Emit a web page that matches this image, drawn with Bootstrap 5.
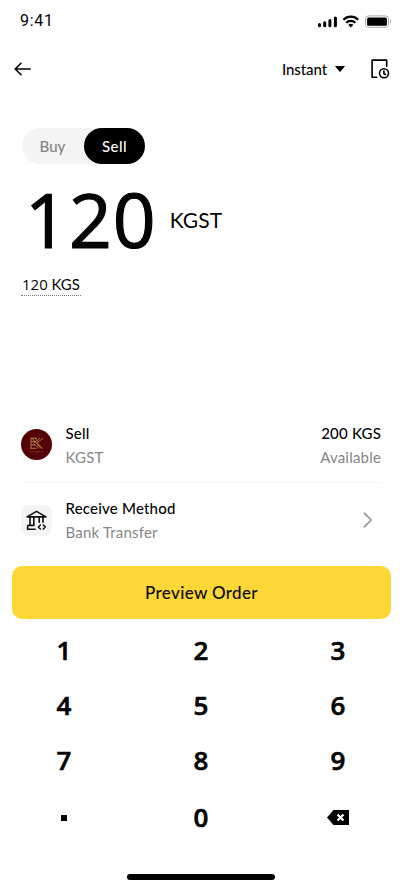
<!DOCTYPE html>
<html lang="en">
<head>
<meta charset="utf-8">
<meta name="viewport" content="width=device-width, initial-scale=1">
<title>Sell KGST</title>
<link href="https://cdn.jsdelivr.net/npm/bootstrap@5.3.0/dist/css/bootstrap.min.css" rel="stylesheet">
<style>
body{background:#fff;color:#050505;font-family:Lato,"Open Sans",sans-serif;overflow:hidden}
svg{display:block;flex:none}
.screen{width:404px;height:886px;overflow:hidden}
.statusbar{height:42px;padding:0 12px 0 20px}
.clock{font:400 16px/20px Roboto,sans-serif;letter-spacing:.75px}
.topbar{height:54px;padding:0 14px}
.mode{font-size:15px;line-height:20px;font-weight:500;letter-spacing:-.1px}
.history{margin-left:26px}
.tabs{width:123px;height:36px;margin:32px 0 0 22px;background:#f4f4f4}
.tabs .btn{font-size:15px;line-height:20px;font-weight:500;padding:0;border:0;height:36px;width:61px;color:#838383}
.tabs .btn.active{background:#000;color:#fff;letter-spacing:.4px}
.amount{height:84px;margin:13px 0 0 25px}
.figure-value{font:400 75px/84px "Open Sans",sans-serif;letter-spacing:1px;-webkit-text-stroke:1.2px #000}
.unit{font-size:21px;line-height:28px;margin:2px 0 0 13px;letter-spacing:.15px}
.fiat{margin:14px 0 0 21px;height:21px;border-bottom:1px dotted #777;font-size:15px;line-height:18px;width:60px;padding-left:1px}
.fiat span{font:400 15px/18px "Open Sans",sans-serif}
.info{margin:111px 23px 0 21px}
.info-row{height:75px}
.info-row + .info-row{border-top:1px solid #f4f4f4}
.info-copy{padding-left:13.5px}
.label-main{font-size:15px;line-height:24px;font-weight:500;letter-spacing:.2px}
.label-sub{font-size:15px;line-height:24px;color:#868686;font-weight:400;letter-spacing:.2px}
.tile{width:31px;height:31px;border-radius:7px;background:#f4f4f4}
.preview{margin:9px 13px 0 12px;height:53px;border-radius:10px;background:#fdd735;border:0;font-size:17px;font-weight:500;letter-spacing:.35px;color:#0b0a03;width:379px}
.preview:hover{background:#fdd735}
.keys{padding:4px 42px 0 40px}
.key{width:48px;height:55px;font:600 26px/55px "Open Sans",sans-serif;-webkit-text-stroke:.6px #000;text-align:center;display:flex;justify-content:center;align-items:center}
.last-keys{margin-top:2px}
.dot{width:6px;height:6px;background:#000}
.home-bar{width:148px;height:6px;border-radius:3px;background:#000;margin:29px 0 0 127px}
</style>
<script src="https://cdn.jsdelivr.net/npm/bootstrap@5.3.0/dist/js/bootstrap.bundle.min.js"></script>
</head>
<body>
<main class="screen d-flex flex-column">
  <div class="statusbar d-flex align-items-center justify-content-between">
    <span class="clock">9:41</span>
    <svg width="76" height="16" viewBox="316 13 76 16">
      <path d="M319.500 25.800v-1.200M324.700 25.800v-3M329.900 25.800v-5.300M335.400 25.800v-7.800" stroke="#000" stroke-width="3" stroke-linecap="round"/>
      <g fill="none" stroke="#000" stroke-width="2.300"><path d="M343.400 19.700a10.600 10.600 0 0 1 14.800 0M346.200 22.700a6.600 6.600 0 0 1 9.200 0"/></g>
      <path d="M348.300 25a3.700 3.700 0 0 1 5 0l-2.500 2.500z"/>
      <rect x="365.500" y="15.900" width="23" height="11.400" rx="3" fill="none" stroke="#aaa"/>
      <rect x="367.100" y="17.500" width="19.800" height="8.200" rx="1.500"/>
      <path d="M390 19.800c1.800.8 1.800 2.900 0 3.700z" fill="#aaa"/>
    </svg>
  </div>
  <header class="topbar d-flex align-items-center">
    <svg width="18" height="14" viewBox="0 0 18 14" fill="none" stroke="#000" stroke-width="1.600" stroke-linecap="round" stroke-linejoin="round"><path d="M16.200 7H1.200M7 1.200 1.200 7 7 12.800"/></svg>
    <div class="mode d-flex align-items-center ms-auto">Instant
      <svg class="ms-2" width="10" height="6" viewBox="0 0 10 6"><path d="M.7 0h8.600q.8 0 .3.700L5.500 5.600q-.5.600-1 0L.4.700Q-.1 0 .7 0z"/></svg>
    </div>
    <svg class="history" width="19" height="20" viewBox="0 0 19 20" fill="none" stroke="#000" stroke-width="1.600" stroke-linejoin="round" stroke-linecap="round"><path d="M15.700 7.300V1.100H1.100v17.200h4.700"/><circle cx="13" cy="14.300" r="4.500"/><path d="M12.900 12v2.500l1.500 1"/></svg>
  </header>
  <div class="tabs d-flex justify-content-between rounded-pill">
    <button class="btn rounded-pill">Buy</button>
    <button class="btn rounded-pill active">Sell</button>
  </div>
  <div class="amount d-flex align-items-center">
    <span class="figure-value">120</span><span class="unit">KGST</span>
  </div>
  <div class="fiat text-nowrap"><span>120</span> KGS</div>

  <section class="info">
    <div class="info-row d-flex align-items-center">
      <svg width="31" height="31" viewBox="0 0 31 31">
        <circle cx="15.500" cy="15.500" r="15.500" fill="#550207"/>
        <g fill="none" stroke="#b58742" stroke-width=".9"><path d="M9.500 9.200h6M9.500 19.300h6M10 9v10.500M10 12.500h4M10 16h4M22 9l-6 5.200 6 5.300M19 9l-6.500 5.500 5.500 5M11 9l9 10.500M14 9l3 3.500"/></g>
        <path d="M9 22.500h13.500" stroke="#8a5030" stroke-width=".7" stroke-dasharray="1.500 .7"/><path d="M14 24h4" stroke="#743420" stroke-width=".5"/>
      </svg>
      <div class="flex-grow-1 info-copy"><div class="label-main">Sell</div><div class="label-sub">KGST</div></div>
      <div class="text-end"><div class="label-main">200 KGS</div><div class="label-sub">Available</div></div>
    </div>
    <div class="info-row d-flex align-items-center">
      <div class="tile d-flex align-items-center justify-content-center">
        <svg width="21" height="21" viewBox="0 0 21 21" fill="none" stroke="#111" stroke-width="1.600" stroke-linejoin="round" stroke-linecap="round"><path d="M1.100 6.900 10.500 1.400l9.400 5.500zM4 7.200v8M7.800 7.200v8M13.200 7.200v5M17 7.200v5M8 15.400H2.700q-1.100 0-1.100 1.100v2.800h7.500M14.400 15l-2 2 2 2M17.300 15l2 2-2 2"/></svg>
      </div>
      <div class="flex-grow-1 info-copy"><div class="label-main">Receive Method</div><div class="label-sub">Bank Transfer</div></div>
      <svg class="me-2" width="10" height="16" viewBox="0 0 10 16" fill="none" stroke="#929292" stroke-width="1.600" stroke-linecap="round" stroke-linejoin="round"><path d="M1.200 1.200 8.300 8l-7.100 6.800"/></svg>
    </div>
  </section>
  <button class="btn preview">Preview Order</button>
  <section class="keys">
    <div class="d-flex justify-content-between"><div class="key">1</div><div class="key">2</div><div class="key">3</div></div>
    <div class="d-flex justify-content-between"><div class="key">4</div><div class="key">5</div><div class="key">6</div></div>
    <div class="d-flex justify-content-between"><div class="key">7</div><div class="key">8</div><div class="key">9</div></div>
    <div class="last-keys d-flex justify-content-between"><div class="key"><span class="dot"></span></div><div class="key">0</div>
      <div class="key"><svg width="22" height="15" viewBox="0 0 22 15"><path d="M6.500 0H22v15H6.500L0 7.500z"/><path d="m10.500 4.500 6 6m0-6-6 6" stroke="#fff" stroke-width="2.200"/></svg></div></div>
  </section>
  <div class="home-bar"></div>
</main>
</body>
</html>
